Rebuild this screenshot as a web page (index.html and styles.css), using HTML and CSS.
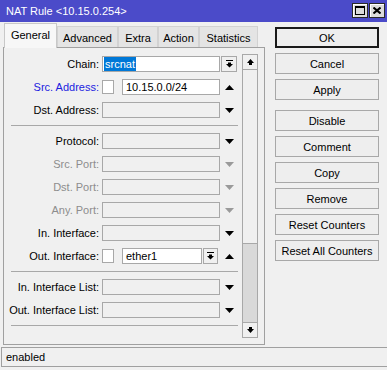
FILE: index.html
```html
<!DOCTYPE html>
<html>
<head>
<meta charset="utf-8">
<link rel="stylesheet" href="styles.css">
</head>
<body>
<div class="titlebar">
  <span class="title">NAT Rule &lt;10.15.0.254&gt;</span>
  <div class="tbtns">
    <span class="tbtn"><svg width="10" height="9" viewBox="0 0 10 9"><path fill-rule="evenodd" d="M0 0H10V9H0Z M1 2V8H9V2Z"/></svg></span>
    <span class="tbtn"><svg width="8" height="7" viewBox="0 0 8 7"><path d="M0.5 0.5L7.5 6.5M7.5 0.5L0.5 6.5" stroke="#000" stroke-width="2"/></svg></span>
  </div>
</div>
<div class="main">
  <div class="left">
    <div class="tabs">
      <div class="tab active w-gen">General</div>
      <div class="tab w-adv">Advanced</div>
      <div class="tab w-ext">Extra</div>
      <div class="tab w-act">Action</div>
      <div class="tab w-sta">Statistics</div>
    </div>
    <div class="panel">
      <div class="form">
        <div class="row">
          <span class="lbl">Chain:</span>
          <span class="fld white"><span class="sel">srcnat</span></span>
          <span class="slot"><span class="dd"><svg width="7" height="8" viewBox="0 0 7 8"><path d="M0 0H7V1H0Z M2 2.5H5V4H7L3.5 7.5L0 4H2Z"/></svg></span></span>
        </div>
        <div class="row">
          <span class="lbl blue">Src. Address:</span>
          <span class="fldgrp"><span class="chk"></span><span class="fld white txt w-src">10.15.0.0/24</span></span>
          <span class="slot"><svg width="9" height="5" viewBox="0 0 9 5"><path d="M0 5H9L4.5 0Z"/></svg></span>
        </div>
        <div class="row">
          <span class="lbl">Dst. Address:</span>
          <span class="fld"></span>
          <span class="slot"><svg width="9" height="5" viewBox="0 0 9 5"><path d="M0 0H9L4.5 5Z"/></svg></span>
        </div>
        <div class="sep"></div>
        <div class="row">
          <span class="lbl">Protocol:</span>
          <span class="fld"></span>
          <span class="slot"><svg width="9" height="5" viewBox="0 0 9 5"><path d="M0 0H9L4.5 5Z"/></svg></span>
        </div>
        <div class="row">
          <span class="lbl gray">Src. Port:</span>
          <span class="fld"></span>
          <span class="slot"><svg width="9" height="5" viewBox="0 0 9 5"><path fill="#9a9a9a" d="M0 0H9L4.5 5Z"/></svg></span>
        </div>
        <div class="row">
          <span class="lbl gray">Dst. Port:</span>
          <span class="fld"></span>
          <span class="slot"><svg width="9" height="5" viewBox="0 0 9 5"><path fill="#9a9a9a" d="M0 0H9L4.5 5Z"/></svg></span>
        </div>
        <div class="row">
          <span class="lbl gray">Any. Port:</span>
          <span class="fld"></span>
          <span class="slot"><svg width="9" height="5" viewBox="0 0 9 5"><path fill="#9a9a9a" d="M0 0H9L4.5 5Z"/></svg></span>
        </div>
        <div class="row">
          <span class="lbl">In. Interface:</span>
          <span class="fld"></span>
          <span class="slot"><svg width="9" height="5" viewBox="0 0 9 5"><path d="M0 0H9L4.5 5Z"/></svg></span>
        </div>
        <div class="row">
          <span class="lbl">Out. Interface:</span>
          <span class="fldgrp"><span class="chk"></span><span class="fld white txt w-out">ether1</span><span class="dd small"><svg width="7" height="8" viewBox="0 0 7 8"><path d="M0 0H7V1H0Z M2 2.5H5V4H7L3.5 7.5L0 4H2Z"/></svg></span></span>
          <span class="slot"><svg width="9" height="5" viewBox="0 0 9 5"><path d="M0 5H9L4.5 0Z"/></svg></span>
        </div>
        <div class="sep"></div>
        <div class="row">
          <span class="lbl">In. Interface List:</span>
          <span class="fld"></span>
          <span class="slot"><svg width="9" height="5" viewBox="0 0 9 5"><path d="M0 0H9L4.5 5Z"/></svg></span>
        </div>
        <div class="row">
          <span class="lbl">Out. Interface List:</span>
          <span class="fld"></span>
          <span class="slot"><svg width="9" height="5" viewBox="0 0 9 5"><path d="M0 0H9L4.5 5Z"/></svg></span>
        </div>
        <div class="sep"></div>
      </div>
      <div class="scrollbar">
        <div class="sb-btn"><svg width="7" height="6" viewBox="0 0 7 6"><path d="M3.5 0L7 4H5V6H2V4H0Z"/></svg></div>
        <div class="sb-thumb"></div>
        <div class="sb-track"></div>
        <div class="sb-btn"><svg width="7" height="6" viewBox="0 0 7 6"><path d="M3.5 6L7 2H5V0H2V2H0Z"/></svg></div>
      </div>
    </div>
  </div>
  <div class="buttons">
    <div class="btn default">OK</div>
    <div class="btn">Cancel</div>
    <div class="btn">Apply</div>
    <div class="btn gap">Disable</div>
    <div class="btn">Comment</div>
    <div class="btn">Copy</div>
    <div class="btn">Remove</div>
    <div class="btn">Reset Counters</div>
    <div class="btn">Reset All Counters</div>
  </div>
</div>
<div class="status">enabled</div>
</body>
</html>
```
FILE: styles.css
```css
html, body {
  margin: 0;
  padding: 0;
}
body {
  width: 387px;
  height: 370px;
  overflow: hidden;
  background: #f0f0f0;
  font: 11px "Liberation Sans", Arial, sans-serif;
  color: #000;
}
.titlebar {
  height: 22px;
  background: #4b4bc9;
  color: #fff;
  display: flex;
  align-items: center;
  justify-content: space-between;
  padding: 0 2px 0 6px;
  box-sizing: border-box;
}
.title {
  font-size: 11px;
  letter-spacing: 0;
}
.tbtns {
  display: flex;
  gap: 1px;
  align-self: flex-start;
  margin-top: 3px;
}
.tbtn {
  width: 16px;
  height: 15px;
  box-sizing: border-box;
  background: #dcdcdc;
  border: 1px solid #2a2a2a;
  box-shadow: inset 1px 1px 0 #fff;
  display: flex;
  align-items: center;
  justify-content: center;
}
.main {
  display: flex;
  padding: 1px 0 0 3px;
}
.left {
  width: 262px;
}
.tabs {
  display: flex;
  align-items: flex-end;
  height: 24px;
  padding-left: 1px;
}
.tab {
  height: 21px;
  box-sizing: border-box;
  border: 1px solid #d2d2d2;
  border-bottom: none;
  background: #e4e4e4;
  display: flex;
  align-items: center;
  justify-content: center;
  padding-top: 1px;
}
.tab.active {
  height: 25px;
  margin-bottom: -1px;
  background: #f7f7f7;
  border-color: #c8c8c8;
  position: relative;
  z-index: 2;
  padding-top: 0;
  padding-bottom: 3px;
}
.w-gen { width: 53px; }
.w-adv { width: 61px; }
.w-ext { width: 40px; }
.w-act { width: 41px; }
.w-sta { width: 59px; }
.panel {
  height: 298px;
  box-sizing: border-box;
  border: 1px solid #a0a0a0;
  display: flex;
  align-items: flex-start;
}
.form {
  width: 234px;
  padding-top: 8px;
  display: flex;
  flex-direction: column;
  gap: 7px;
}
.row {
  display: flex;
  align-items: center;
  height: 16px;
}
.lbl {
  width: 95px;
  margin-right: 3px;
  text-align: right;
  white-space: nowrap;
}
.lbl.blue { color: #1c1ce0; }
.lbl.gray { color: #8d8d8d; }
.fld {
  width: 118px;
  height: 16px;
  box-sizing: border-box;
  border: 1px solid #a8a8a8;
  background: #f0f0f0;
  display: flex;
  align-items: center;
  padding-left: 1px;
  flex: none;
}
.fld.white { background: #fff; }
.fld.txt { padding-left: 3px; }
.sel {
  background: #0078d7;
  color: #fff;
  height: 14px;
  line-height: 14px;
  padding: 0 1px;
}
.fldgrp {
  width: 118px;
  display: flex;
  align-items: center;
}
.chk {
  width: 12px;
  height: 14px;
  box-sizing: border-box;
  border: 1px solid #a8a8a8;
  background: #fff;
  margin-right: 8px;
  flex: none;
}
.w-src { width: 98px; }
.w-out { width: 80px; }
.slot {
  width: 18px;
  height: 16px;
  display: flex;
  align-items: center;
  justify-content: center;
}
.dd {
  width: 16px;
  height: 16px;
  box-sizing: border-box;
  border: 1px solid #a8a8a8;
  background: #f0f0f0;
  display: flex;
  align-items: center;
  justify-content: center;
}
.dd.small {
  width: 15px;
  margin-left: 1px;
}
.sep {
  height: 1px;
  width: 227px;
  margin-left: 7px;
  background: #a8a8a8;
}
.scrollbar {
  width: 16px;
  margin: 6px 0 0 4px;
  display: flex;
  flex-direction: column;
}
.sb-btn {
  height: 16px;
  box-sizing: border-box;
  border: 1px solid #a8a8a8;
  background: #f0f0f0;
  display: flex;
  align-items: center;
  justify-content: center;
}
.sb-thumb {
  height: 174px;
  box-sizing: border-box;
  border: 1px solid #a8a8a8;
  border-top: none;
  background: #f0f0f0;
}
.sb-track {
  height: 78px;
  box-sizing: border-box;
  border-left: 1px solid #a8a8a8;
  border-right: 1px solid #a8a8a8;
  background: #d9d9d9;
}
.buttons {
  width: 104px;
  margin-left: 10px;
  padding-top: 4px;
  display: flex;
  flex-direction: column;
  gap: 5px;
}
.btn {
  height: 21px;
  box-sizing: border-box;
  border: 1px solid #a8a8a8;
  background: #eeeeee;
  display: flex;
  align-items: center;
  justify-content: center;
  white-space: nowrap;
}
.btn.default {
  border-color: #1a1a1a;
  box-shadow: inset 0 0 0 1px #1a1a1a;
}
.btn.gap {
  margin-top: 5px;
}
.status {
  margin-top: 2px;
  margin-left: 1px;
  height: 20px;
  box-sizing: border-box;
  border-top: 1px solid #a0a0a0;
  border-bottom: 1px solid #a0a0a0;
  border-left: 1px solid #a0a0a0;
  padding-left: 4px;
  line-height: 18px;
}
```
